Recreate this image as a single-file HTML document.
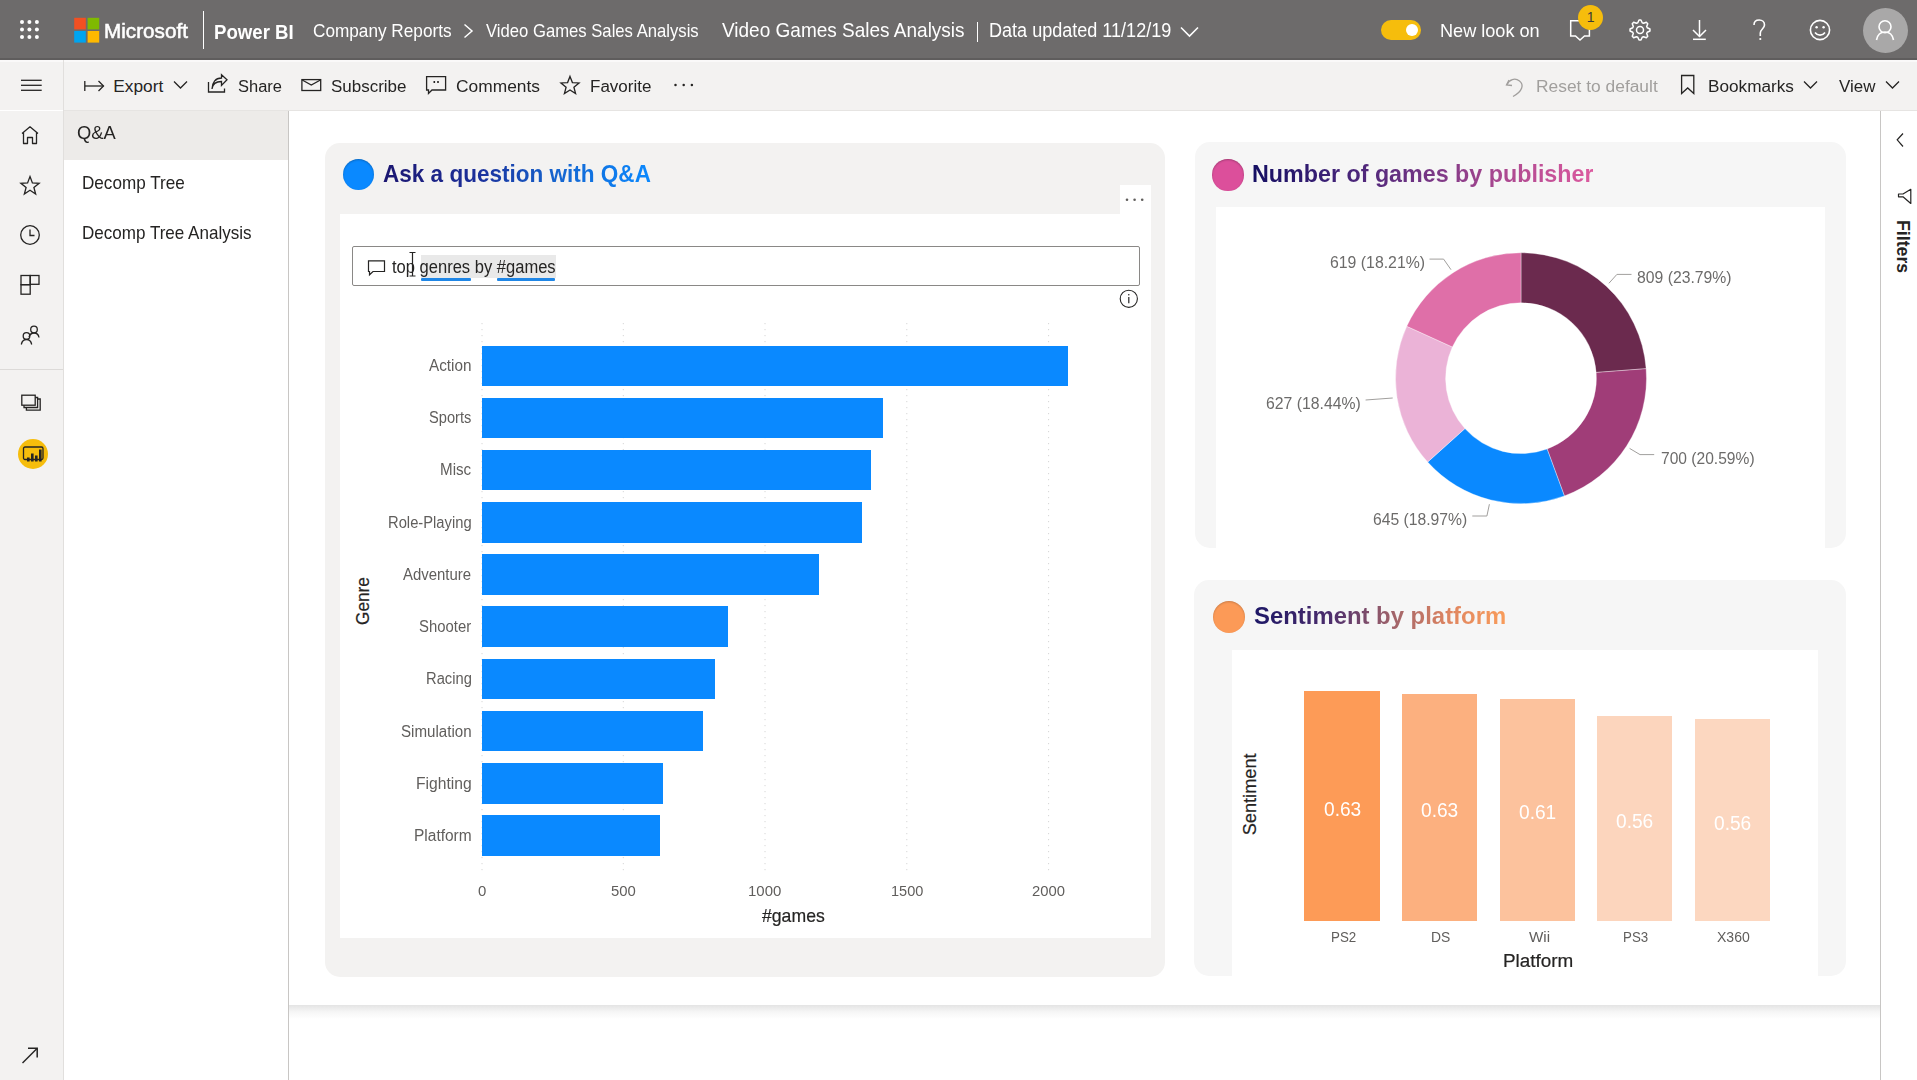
<!DOCTYPE html><html><head><meta charset="utf-8"><title>Power BI</title><style>
*{margin:0;padding:0;box-sizing:border-box}
html,body{width:1917px;height:1080px;overflow:hidden;background:#fff;font-family:"Liberation Sans",sans-serif}
.a{position:absolute}
.t{position:absolute;white-space:nowrap;transform-origin:0 0}
svg{position:absolute;overflow:visible}
</style></head><body>
<div class="a" style="left:0;top:0;width:1917px;height:60px;background:#6d6b6b"></div>
<div class="a" style="left:0;top:60px;width:1917px;height:50px;background:#f3f2f1"></div>
<div class="a" style="left:0;top:58px;width:1917px;height:2px;background:#5f5d5d"></div>
<div class="a" style="left:0;top:60px;width:1917px;height:2px;background:#faf9f9"></div>
<div class="a" style="left:64px;top:110px;width:1853px;height:1px;background:#e6e4e2"></div>
<div class="a" style="left:0;top:111px;width:63px;height:969px;background:#f3f2f1"></div>
<div class="a" style="left:63px;top:60px;width:1px;height:1020px;background:#e1dfdd"></div>
<div class="a" style="left:0;top:369px;width:63px;height:1px;background:#dcdad8"></div>
<div class="a" style="left:64px;top:111px;width:224px;height:969px;background:#fff"></div>
<div class="a" style="left:64px;top:111px;width:224px;height:49px;background:#edebe9"></div>
<div class="a" style="left:288px;top:111px;width:1px;height:969px;background:#c8c6c4"></div>
<div class="a" style="left:1880px;top:111px;width:1px;height:969px;background:#c8c6c4"></div>
<div class="a" style="left:289px;top:1005px;width:1591px;height:14px;background:linear-gradient(#e4e4e4,#f6f6f6 50%,#fff)"></div>
<div class="a" style="left:325px;top:143px;width:840px;height:834px;background:#f3f2f1;border-radius:15px"></div>
<div class="a" style="left:340px;top:214px;width:811px;height:724px;background:#fff"></div>
<div class="a" style="left:1120px;top:185px;width:31px;height:30px;background:#fff"></div>
<div class="a" style="left:1195px;top:142px;width:651px;height:406px;background:#f6f6f6;border-radius:15px"></div>
<div class="a" style="left:1216px;top:207px;width:609px;height:341px;background:#fff"></div>
<div class="a" style="left:1194px;top:580px;width:652px;height:396px;background:#f6f6f6;border-radius:15px"></div>
<div class="a" style="left:1232px;top:650px;width:586px;height:326px;background:#fff"></div>
<svg style="left:0px;top:0px" width="60" height="60" viewBox="0 0 60 60" ><circle cx="22.0" cy="22.0" r="2" fill="#fff"/><circle cx="22.0" cy="29.4" r="2" fill="#fff"/><circle cx="22.0" cy="36.9" r="2" fill="#fff"/><circle cx="29.4" cy="22.0" r="2" fill="#fff"/><circle cx="29.4" cy="29.4" r="2" fill="#fff"/><circle cx="29.4" cy="36.9" r="2" fill="#fff"/><circle cx="36.9" cy="22.0" r="2" fill="#fff"/><circle cx="36.9" cy="29.4" r="2" fill="#fff"/><circle cx="36.9" cy="36.9" r="2" fill="#fff"/></svg>
<svg style="left:0px;top:0px" width="110" height="60" viewBox="0 0 110 60" ><rect x="74.2" y="17.8" width="11.6" height="11.6" fill="#f25022"/><rect x="87.6" y="17.8" width="11.6" height="11.6" fill="#7fba00"/><rect x="74.2" y="31" width="11.6" height="11.6" fill="#00a4ef"/><rect x="87.6" y="31" width="11.6" height="11.6" fill="#ffb900"/></svg>
<div class="t " style="left:104.05px;top:21.00px;font-size:20.50px;line-height:20.50px;font-weight:normal;color:#ffffff;transform:scaleX(1.0088);-webkit-text-stroke:0.55px #fff;">Microsoft</div>
<div class="a" style="left:203px;top:11px;width:1.3px;height:38px;background:#fff"></div>
<div class="t " style="left:213.59px;top:23.00px;font-size:19.50px;line-height:19.50px;font-weight:bold;color:#ffffff;transform:scaleX(0.9551);">Power BI</div>
<div class="t " style="left:312.74px;top:21.00px;font-size:19.00px;line-height:19.00px;font-weight:normal;color:#ffffff;transform:scaleX(0.9048);">Company Reports</div>
<svg style="left:460px;top:20px" width="20" height="20" viewBox="0 0 20 20" ><polyline points="4.5,4.5 12,11 4.5,17.5" fill="none" stroke="#fff" stroke-width="1.5"/></svg>
<div class="t " style="left:485.92px;top:21.00px;font-size:19.00px;line-height:19.00px;font-weight:normal;color:#ffffff;transform:scaleX(0.8768);">Video Games Sales Analysis</div>
<div class="t " style="left:722.40px;top:19.00px;font-size:21.00px;line-height:21.00px;font-weight:normal;color:#ffffff;transform:scaleX(0.9049);">Video Games Sales Analysis</div>
<div class="a" style="left:976.5px;top:22px;width:1.6px;height:20px;background:#fff"></div>
<div class="t " style="left:988.96px;top:21.00px;font-size:19.50px;line-height:19.50px;font-weight:normal;color:#ffffff;transform:scaleX(0.9254);">Data updated 11/12/19</div>
<svg style="left:1178px;top:20px" width="24" height="20" viewBox="0 0 24 20" ><polyline points="3,7.5 11.5,16 20,7.5" fill="none" stroke="#fff" stroke-width="1.6"/></svg>
<div class="a" style="left:1381px;top:20px;width:40px;height:20px;border-radius:10px;background:#f6bd0c"></div>
<div class="a" style="left:1405.9px;top:24.1px;width:11.8px;height:11.8px;border-radius:50%;background:#fff"></div>
<div class="t " style="left:1439.85px;top:22.00px;font-size:18.50px;line-height:18.50px;font-weight:normal;color:#ffffff;transform:scaleX(0.9791);">New look on</div>
<svg style="left:1565px;top:15px" width="30" height="30" viewBox="0 0 30 30" ><path d="M5.7,5.8 H24.4 V20.9 H19.5 L15,25 L10.5,20.9 H5.7 Z" fill="none" stroke="#fff" stroke-width="1.5"/></svg>
<div class="a" style="left:1578px;top:5px;width:25px;height:25px;border-radius:50%;background:#f6bd0c"></div>
<div class="t " style="left:1586.70px;top:10.00px;font-size:14.00px;line-height:14.00px;font-weight:normal;color:#3b3a39;">1</div>
<svg style="left:1625px;top:15px" width="30" height="30" viewBox="0 0 30 30" ><polygon points="24.95,14.02 24.95,15.98 22.27,17.21 21.70,18.58 22.73,21.34 21.34,22.73 18.58,21.70 17.21,22.27 15.98,24.95 14.02,24.95 12.79,22.27 11.42,21.70 8.66,22.73 7.27,21.34 8.30,18.58 7.73,17.21 5.05,15.98 5.05,14.02 7.73,12.79 8.30,11.42 7.27,8.66 8.66,7.27 11.42,8.30 12.79,7.73 14.02,5.05 15.98,5.05 17.21,7.73 18.58,8.30 21.34,7.27 22.73,8.66 21.70,11.42 22.27,12.79" fill="none" stroke="#fff" stroke-width="1.5" stroke-linejoin="round"/><circle cx="15" cy="15" r="3.5" fill="none" stroke="#fff" stroke-width="1.5"/></svg>
<svg style="left:1685px;top:15px" width="30" height="30" viewBox="0 0 30 30" ><line x1="14.5" y1="5" x2="14.5" y2="21.5" stroke="#fff" stroke-width="1.5"/><polyline points="8,15 14.5,21.5 21,15" fill="none" stroke="#fff" stroke-width="1.5"/><line x1="8" y1="24.3" x2="20.8" y2="24.3" stroke="#fff" stroke-width="1.5"/></svg>
<svg style="left:1745px;top:15px" width="30" height="30" viewBox="0 0 30 30" ><path d="M9,10 C9,6.5 11.5,5 14.2,5 C17.2,5 19.5,7 19.5,10 C19.5,13.5 15.3,14.5 15.3,18 V21" fill="none" stroke="#fff" stroke-width="1.6"/><circle cx="15.3" cy="24" r="1.1" fill="#fff"/></svg>
<svg style="left:1805px;top:15px" width="30" height="30" viewBox="0 0 30 30" ><circle cx="15" cy="15" r="9.6" fill="none" stroke="#fff" stroke-width="1.6"/><circle cx="11.6" cy="12.3" r="1.2" fill="#fff"/><circle cx="18.6" cy="12.3" r="1.2" fill="#fff"/><path d="M10,17.5 C12.5,21 17.5,21 20,17.5" fill="none" stroke="#fff" stroke-width="1.6"/></svg>
<div class="a" style="left:1863px;top:8px;width:45px;height:45px;border-radius:50%;background:#a9a8a8"></div>
<svg style="left:1870px;top:15px" width="30" height="30" viewBox="0 0 30 30" ><circle cx="15" cy="11.8" r="6" fill="none" stroke="#fff" stroke-width="1.6"/><path d="M6.5,25 C7.5,19.5 11,17 15,17 C19,17 22.5,19.5 23.5,25" fill="none" stroke="#fff" stroke-width="1.6"/></svg>
<svg style="left:84px;top:76px" width="22" height="20" viewBox="0 0 22 20" ><line x1="0.8" y1="5" x2="0.8" y2="15" stroke="#252423" stroke-width="1.3" fill="none"/><line x1="1" y1="10" x2="19.5" y2="10" stroke="#252423" stroke-width="1.3" fill="none"/><polyline points="14.5,5 19.5,10 14.5,15" stroke="#252423" stroke-width="1.3" fill="none"/></svg>
<div class="t " style="left:113.32px;top:78.00px;font-size:17.30px;line-height:17.30px;font-weight:normal;color:#252423;">Export</div>
<svg style="left:172px;top:78px" width="18" height="14" viewBox="0 0 18 14" ><polyline points="2,3.5 8.5,10 15,3.5" stroke="#252423" stroke-width="1.3" fill="none"/></svg>
<svg style="left:206px;top:74px" width="24" height="22" viewBox="0 0 24 22" ><path d="M2.5,8 V18 H18.5 V14.5" stroke="#252423" stroke-width="1.3" fill="none"/><path d="M6,15 C6.5,10 10,7.5 15.5,7.5 V11.5 L21,5.8 L15.5,0.8 V4 C9.5,4 6,8.5 6,15 Z" stroke="#252423" stroke-width="1.3" fill="none"/></svg>
<div class="t " style="left:238.16px;top:78.00px;font-size:17.30px;line-height:17.30px;font-weight:normal;color:#252423;transform:scaleX(0.9540);">Share</div>
<svg style="left:300px;top:76px" width="24" height="18" viewBox="0 0 24 18" ><rect x="1.9" y="3.6" width="18.8" height="10.9" stroke="#252423" stroke-width="1.3" fill="none"/><polyline points="2.2,4 11.3,9 20.4,4" stroke="#252423" stroke-width="1.3" fill="none"/></svg>
<div class="t " style="left:331.24px;top:78.00px;font-size:17.30px;line-height:17.30px;font-weight:normal;color:#252423;transform:scaleX(0.9822);">Subscribe</div>
<svg style="left:424px;top:74px" width="24" height="22" viewBox="0 0 24 22" ><path d="M2.6,2.6 H21.6 V16 H8 L4.5,19.5 V16 H2.6 Z" stroke="#252423" stroke-width="1.3" fill="none"/><line x1="10.3" y1="7" x2="10.3" y2="9" stroke="#252423" stroke-width="1.6"/><line x1="14" y1="7" x2="14" y2="9" stroke="#252423" stroke-width="1.6"/></svg>
<div class="t " style="left:456.13px;top:78.00px;font-size:17.30px;line-height:17.30px;font-weight:normal;color:#252423;transform:scaleX(1.0052);">Comments</div>
<svg style="left:558px;top:74px" width="24" height="22" viewBox="0 0 24 22" ><polygon points="12.00,2.40 14.41,8.58 21.04,8.96 15.90,13.17 17.58,19.59 12.00,16.00 6.42,19.59 8.10,13.17 2.96,8.96 9.59,8.58" stroke="#252423" stroke-width="1.3" fill="none" stroke-linejoin="miter"/></svg>
<div class="t " style="left:589.84px;top:78.00px;font-size:17.30px;line-height:17.30px;font-weight:normal;color:#252423;transform:scaleX(0.9836);">Favorite</div>
<svg style="left:670px;top:80px" width="26" height="10" viewBox="0 0 26 10" ><circle cx="5.5" cy="5" r="1.25" fill="#252423"/><circle cx="13.7" cy="5" r="1.25" fill="#252423"/><circle cx="21.9" cy="5" r="1.25" fill="#252423"/></svg>
<svg style="left:1503px;top:74px" width="24" height="26" viewBox="0 0 24 26" ><path d="M6,6 L3.5,11 L9,11.5" fill="none" stroke="#a19f9d" stroke-width="1.3"/><path d="M4,10.8 C6,5.5 12,3.5 16.5,7 C21,10.5 20,17 10,22.5" fill="none" stroke="#a19f9d" stroke-width="1.3"/></svg>
<div class="t " style="left:1535.81px;top:78.00px;font-size:17.30px;line-height:17.30px;font-weight:normal;color:#a19f9d;transform:scaleX(1.0056);">Reset to default</div>
<svg style="left:1678px;top:73px" width="20" height="24" viewBox="0 0 20 24" ><path d="M3.6,2.5 H15.8 V20.5 L9.7,15 L3.6,20.5 Z" stroke="#252423" stroke-width="1.3" fill="none"/></svg>
<div class="t " style="left:1707.62px;top:78.00px;font-size:17.30px;line-height:17.30px;font-weight:normal;color:#252423;transform:scaleX(0.9940);">Bookmarks</div>
<svg style="left:1802px;top:78px" width="18" height="14" viewBox="0 0 18 14" ><polyline points="2,3.5 8.5,10 15,3.5" stroke="#252423" stroke-width="1.3" fill="none"/></svg>
<div class="t " style="left:1838.52px;top:78.00px;font-size:17.30px;line-height:17.30px;font-weight:normal;color:#252423;transform:scaleX(0.9809);">View</div>
<svg style="left:1884px;top:78px" width="18" height="14" viewBox="0 0 18 14" ><polyline points="2,3.5 8.5,10 15,3.5" stroke="#252423" stroke-width="1.3" fill="none"/></svg>
<svg style="left:14px;top:70px" width="36" height="30" viewBox="0 0 36 30" ><line x1="7" y1="10.3" x2="27.7" y2="10.3" stroke="#252423" stroke-width="1.3" fill="none"/><line x1="7" y1="15.3" x2="27.7" y2="15.3" stroke="#252423" stroke-width="1.3" fill="none"/><line x1="7" y1="20.3" x2="27.7" y2="20.3" stroke="#252423" stroke-width="1.3" fill="none"/></svg>
<svg style="left:15px;top:120px" width="30" height="30" viewBox="0 0 30 30" ><path d="M7,13.5 L15,6.8 L23,13.5 M8.5,12.5 V23.5 H12.5 V17.5 H17.5 V23.5 H21.5 V12.5" stroke="#252423" stroke-width="1.3" fill="none" stroke-linejoin="round"/></svg>
<svg style="left:15px;top:170px" width="30" height="30" viewBox="0 0 30 30" ><polygon points="15.00,6.60 17.41,12.88 24.13,13.23 18.90,17.47 20.64,23.97 15.00,20.30 9.36,23.97 11.10,17.47 5.87,13.23 12.59,12.88" stroke="#252423" stroke-width="1.3" fill="none"/></svg>
<svg style="left:15px;top:220px" width="30" height="30" viewBox="0 0 30 30" ><circle cx="15" cy="15" r="9.3" stroke="#252423" stroke-width="1.3" fill="none"/><polyline points="15,9.5 15,15.5 19.5,15.5" stroke="#252423" stroke-width="1.3" fill="none"/></svg>
<svg style="left:15px;top:270px" width="30" height="30" viewBox="0 0 30 30" ><rect x="6" y="5.5" width="9.2" height="9.2" stroke="#252423" stroke-width="1.3" fill="none"/><rect x="15.2" y="5.5" width="8.8" height="8.8" stroke="#252423" stroke-width="1.3" fill="none"/><rect x="6" y="14.7" width="9.2" height="9.5" stroke="#252423" stroke-width="1.3" fill="none"/></svg>
<svg style="left:15px;top:320px" width="30" height="30" viewBox="0 0 30 30" ><circle cx="19" cy="9.5" r="3.3" stroke="#252423" stroke-width="1.3" fill="none"/><path d="M14,17 C15,13.8 17,13 19,13 C21.5,13 23.5,14.5 24,17.5" stroke="#252423" stroke-width="1.3" fill="none"/><circle cx="11.5" cy="16" r="3.3" stroke="#252423" stroke-width="1.3" fill="none"/><path d="M6.3,24.5 C7,21 9,19.5 11.5,19.5 C14,19.5 16,21 16.7,24.5" stroke="#252423" stroke-width="1.3" fill="none"/></svg>
<svg style="left:15px;top:390px" width="30" height="26" viewBox="0 0 30 26" ><rect x="6.8" y="5.2" width="13.4" height="10" stroke="#252423" stroke-width="1.3" fill="none"/><path d="M20.2,7.5 H22.6 V17.5 H9 V15.2" stroke="#252423" stroke-width="1.3" fill="none"/><path d="M22.6,9 H25.2 V20.2 H11.4 V17.5" stroke="#252423" stroke-width="1.3" fill="none"/></svg>
<div class="a" style="left:17.8px;top:439px;width:30px;height:30px;border-radius:50%;background:#f6bd0c"></div>
<svg style="left:18px;top:439px" width="30" height="30" viewBox="0 0 30 30" ><rect x="5.5" y="8" width="19.5" height="12.5" rx="1.5" fill="none" stroke="#252423" stroke-width="1.3"/><rect x="9" y="18.5" width="2.6" height="4" fill="#252423"/><rect x="13" y="14.5" width="2.6" height="8" fill="#252423"/><rect x="17" y="16.5" width="2.6" height="6" fill="#252423"/><rect x="21" y="10.5" width="2.6" height="12" fill="#252423"/></svg>
<svg style="left:15px;top:1040px" width="30" height="30" viewBox="0 0 30 30" ><line x1="7.5" y1="23" x2="22" y2="8.5" stroke="#252423" stroke-width="1.5" fill="none"/><polyline points="13,8.3 22.2,8.3 22.2,17.5" stroke="#252423" stroke-width="1.5" fill="none"/></svg>
<div class="t " style="left:77.17px;top:124.00px;font-size:18.80px;line-height:18.80px;font-weight:normal;color:#252423;transform:scaleX(0.9763);">Q&amp;A</div>
<div class="t " style="left:82.13px;top:174.00px;font-size:18.50px;line-height:18.50px;font-weight:normal;color:#252423;transform:scaleX(0.9247);">Decomp Tree</div>
<div class="t " style="left:82.14px;top:224.00px;font-size:18.50px;line-height:18.50px;font-weight:normal;color:#252423;transform:scaleX(0.9211);">Decomp Tree Analysis</div>
<svg style="left:1890px;top:128px" width="20" height="24" viewBox="0 0 20 24" ><polyline points="13,5.5 7.2,11.8 13,18.5" fill="none" stroke="#252423" stroke-width="1.2"/></svg>
<svg style="left:1895px;top:186px" width="20" height="20" viewBox="0 0 20 20" ><path d="M15.8,3.3 V17.5 L8,10.8 H3.5 V8 H8 Z" fill="none" stroke="#252423" stroke-width="1.2" stroke-linejoin="round"/></svg>
<div class="t" style="left:1876.13px;top:237.62px;font-size:17.50px;line-height:17.50px;font-weight:bold;color:#252423;transform-origin:26.47px 8.78px;transform:rotate(90deg) scaleX(1.0106);">Filters</div>
<div class="a" style="left:343px;top:159.2px;width:31px;height:31px;border-radius:50%;background:#0a89ff;box-shadow:inset 0 1px 2px rgba(0,0,0,.25)"></div>
<div class="t " style="left:382.74px;top:162.00px;font-size:24.50px;line-height:24.50px;font-weight:bold;color:#000;transform:scaleX(0.9197);background:linear-gradient(90deg,#1c1670 0%,#1b2f9a 35%,#1565cf 65%,#0a89ff 100%);-webkit-background-clip:text;background-clip:text;-webkit-text-fill-color:transparent;">Ask a question with Q&amp;A</div>
<svg style="left:1120px;top:185px" width="31" height="30" viewBox="0 0 31 30" ><circle cx="7.0" cy="14.8" r="1.3" fill="#605e5c"/><circle cx="14.6" cy="14.8" r="1.3" fill="#605e5c"/><circle cx="22.2" cy="14.8" r="1.3" fill="#605e5c"/></svg>
<div class="a" style="left:351.5px;top:246px;width:788.5px;height:39.5px;border:1px solid #8a8886;border-radius:2px;background:#fff"></div>
<div class="a" style="left:421px;top:255px;width:134.5px;height:22.5px;background:#e9e9e9"></div>
<svg style="left:364px;top:256px" width="24" height="22" viewBox="0 0 24 22" ><path d="M4.5,4.8 H20.5 V15.5 H9 L5.5,18.8 V15.5 H4.5 Z" fill="none" stroke="#252423" stroke-width="1.2"/></svg>
<div class="t " style="left:392.15px;top:259.00px;font-size:17.50px;line-height:17.50px;font-weight:normal;color:#252423;transform:scaleX(0.9449);">top genres by #games</div>
<div class="a" style="left:421px;top:278px;width:49.5px;height:2.6px;background:#1f86e6;border-radius:1px"></div>
<div class="a" style="left:497.3px;top:278px;width:58px;height:2.6px;background:#1f86e6;border-radius:1px"></div>
<svg style="left:405px;top:250px" width="16" height="30" viewBox="0 0 16 30" ><path d="M4.5,2.5 H10.5 M7.5,2.5 V26 M4.5,26 H10.5" fill="none" stroke="#252423" stroke-width="1.2"/></svg>
<svg style="left:1118px;top:288px" width="22" height="22" viewBox="0 0 22 22" ><circle cx="10.8" cy="10.8" r="8.6" fill="none" stroke="#252423" stroke-width="1.1"/><line x1="10.8" y1="9" x2="10.8" y2="15.2" stroke="#252423" stroke-width="1.2"/><circle cx="10.8" cy="6.8" r="0.8" fill="#252423"/></svg>
<svg style="left:0px;top:0px" width="1917" height="1080" viewBox="0 0 1917 1080" style="left:0;top:0"><line x1="482.0" y1="323" x2="482.0" y2="872" stroke="#d6d6d6" stroke-width="1" stroke-dasharray="1.2 4.8"/><line x1="623.3" y1="323" x2="623.3" y2="872" stroke="#d6d6d6" stroke-width="1" stroke-dasharray="1.2 4.8"/><line x1="765.0" y1="323" x2="765.0" y2="872" stroke="#d6d6d6" stroke-width="1" stroke-dasharray="1.2 4.8"/><line x1="906.8" y1="323" x2="906.8" y2="872" stroke="#d6d6d6" stroke-width="1" stroke-dasharray="1.2 4.8"/><line x1="1048.6" y1="323" x2="1048.6" y2="872" stroke="#d6d6d6" stroke-width="1" stroke-dasharray="1.2 4.8"/></svg>
<div class="a" style="left:482px;top:345.6px;width:586.0px;height:40.5px;background:#0a89ff"></div>
<div class="t " style="left:429.12px;top:358.00px;font-size:15.60px;line-height:15.60px;font-weight:normal;color:#605e5c;transform:scaleX(0.9816);">Action</div>
<div class="a" style="left:482px;top:397.8px;width:400.8px;height:40.5px;background:#0a89ff"></div>
<div class="t " style="left:428.94px;top:410.00px;font-size:15.60px;line-height:15.60px;font-weight:normal;color:#605e5c;transform:scaleX(0.9376);">Sports</div>
<div class="a" style="left:482px;top:449.7px;width:389.1px;height:40.5px;background:#0a89ff"></div>
<div class="t " style="left:439.89px;top:462.00px;font-size:15.60px;line-height:15.60px;font-weight:normal;color:#605e5c;transform:scaleX(0.9730);">Misc</div>
<div class="a" style="left:482px;top:502.0px;width:379.7px;height:40.5px;background:#0a89ff"></div>
<div class="t " style="left:388.02px;top:515.00px;font-size:15.60px;line-height:15.60px;font-weight:normal;color:#605e5c;transform:scaleX(0.9456);">Role-Playing</div>
<div class="a" style="left:482px;top:554.2px;width:336.9px;height:40.5px;background:#0a89ff"></div>
<div class="t " style="left:403.23px;top:567.00px;font-size:15.60px;line-height:15.60px;font-weight:normal;color:#605e5c;transform:scaleX(0.9580);">Adventure</div>
<div class="a" style="left:482px;top:606.3px;width:245.6px;height:40.5px;background:#0a89ff"></div>
<div class="t " style="left:418.83px;top:619.00px;font-size:15.60px;line-height:15.60px;font-weight:normal;color:#605e5c;transform:scaleX(0.9541);">Shooter</div>
<div class="a" style="left:482px;top:658.7px;width:232.9px;height:40.5px;background:#0a89ff"></div>
<div class="t " style="left:425.82px;top:671.00px;font-size:15.60px;line-height:15.60px;font-weight:normal;color:#605e5c;transform:scaleX(0.9448);">Racing</div>
<div class="a" style="left:482px;top:710.9px;width:221.2px;height:40.5px;background:#0a89ff"></div>
<div class="t " style="left:401.02px;top:724.00px;font-size:15.60px;line-height:15.60px;font-weight:normal;color:#605e5c;transform:scaleX(0.9700);">Simulation</div>
<div class="a" style="left:482px;top:763.3px;width:181.0px;height:40.5px;background:#0a89ff"></div>
<div class="t " style="left:416.05px;top:776.00px;font-size:15.60px;line-height:15.60px;font-weight:normal;color:#605e5c;transform:scaleX(1.0038);">Fighting</div>
<div class="a" style="left:482px;top:815.2px;width:177.9px;height:40.5px;background:#0a89ff"></div>
<div class="t " style="left:414.06px;top:828.00px;font-size:15.60px;line-height:15.60px;font-weight:normal;color:#605e5c;transform:scaleX(0.9934);">Platform</div>
<div class="t " style="left:478.20px;top:884.00px;font-size:14.70px;line-height:14.70px;font-weight:normal;color:#605e5c;transform:scaleX(1.0168);">0</div>
<div class="t " style="left:611.40px;top:884.00px;font-size:14.70px;line-height:14.70px;font-weight:normal;color:#605e5c;transform:scaleX(1.0129);">500</div>
<div class="t " style="left:748.38px;top:884.00px;font-size:14.70px;line-height:14.70px;font-weight:normal;color:#605e5c;transform:scaleX(1.0188);">1000</div>
<div class="t " style="left:890.71px;top:884.00px;font-size:14.70px;line-height:14.70px;font-weight:normal;color:#605e5c;transform:scaleX(0.9898);">1500</div>
<div class="t " style="left:1031.66px;top:884.00px;font-size:14.70px;line-height:14.70px;font-weight:normal;color:#605e5c;transform:scaleX(1.0101);">2000</div>
<div class="t " style="left:762.31px;top:907.00px;font-size:18.50px;line-height:18.50px;font-weight:normal;color:#252423;transform:scaleX(0.9536);-webkit-text-stroke:0.2px #252423;">#games</div>
<div class="t" style="left:337.94px;top:592.07px;font-size:18.00px;line-height:18.00px;font-weight:normal;color:#252423;transform-origin:25.07px 9.03px;transform:rotate(-90deg) scaleX(0.9559);-webkit-text-stroke:0.2px #252423;">Genre</div>
<div class="a" style="left:1212px;top:159.2px;width:31.5px;height:31.5px;border-radius:50%;background:#dc4f9b;box-shadow:inset 0 1px 2px rgba(0,0,0,.25)"></div>
<div class="t " style="left:1251.59px;top:162.00px;font-size:24.50px;line-height:24.50px;font-weight:bold;color:#000;transform:scaleX(0.9503);background:linear-gradient(90deg,#150f62 0%,#3b2075 22%,#6e3383 48%,#a8478f 72%,#dc5a9f 100%);-webkit-background-clip:text;background-clip:text;-webkit-text-fill-color:transparent;">Number of games by publisher</div>
<svg style="left:0px;top:0px" width="1917" height="1080" viewBox="0 0 1917 1080" style="left:0;top:0"><path d="M1521.00,252.70 A125.50,125.50 0 0 1 1646.14,368.67 L1596.18,372.47 A75.40,75.40 0 0 0 1521.00,302.80 Z" fill="#6b2a4e" stroke="rgba(255,255,255,0.6)" stroke-width="0.6"/><path d="M1646.14,368.67 A125.50,125.50 0 0 1 1564.40,495.96 L1547.08,448.95 A75.40,75.40 0 0 0 1596.18,372.47 Z" fill="#a03d78" stroke="rgba(255,255,255,0.6)" stroke-width="0.6"/><path d="M1564.40,495.96 A125.50,125.50 0 0 1 1427.65,462.08 L1464.91,428.59 A75.40,75.40 0 0 0 1547.08,448.95 Z" fill="#0a89ff" stroke="rgba(255,255,255,0.6)" stroke-width="0.6"/><path d="M1427.65,462.08 A125.50,125.50 0 0 1 1406.75,326.27 L1452.36,347.00 A75.40,75.40 0 0 0 1464.91,428.59 Z" fill="#ebb3d7" stroke="rgba(255,255,255,0.6)" stroke-width="0.6"/><path d="M1406.75,326.27 A125.50,125.50 0 0 1 1521.00,252.70 L1521.00,302.80 A75.40,75.40 0 0 0 1452.36,347.00 Z" fill="#df6fa8" stroke="rgba(255,255,255,0.6)" stroke-width="0.6"/><polyline points="1608.9,283.3 1616.9,274.4 1631.5,274.4" fill="none" stroke="#a19f9d" stroke-width="1"/><polyline points="1429.5,259.1 1443.6,259.1 1451,269.7" fill="none" stroke="#a19f9d" stroke-width="1"/><polyline points="1365.6,400 1392.7,398" fill="none" stroke="#a19f9d" stroke-width="1"/><polyline points="1629.6,448.4 1640,454.6 1654.2,454.6" fill="none" stroke="#a19f9d" stroke-width="1"/><polyline points="1472.3,516 1486.9,516 1489.4,504.2" fill="none" stroke="#a19f9d" stroke-width="1"/></svg>
<div class="t " style="left:1636.89px;top:270.00px;font-size:16.80px;line-height:16.80px;font-weight:normal;color:#6c6b6a;transform:scaleX(0.9380);">809 (23.79%)</div>
<div class="t " style="left:1329.61px;top:255.00px;font-size:16.80px;line-height:16.80px;font-weight:normal;color:#6c6b6a;transform:scaleX(0.9439);">619 (18.21%)</div>
<div class="t " style="left:1266.31px;top:396.00px;font-size:16.80px;line-height:16.80px;font-weight:normal;color:#6c6b6a;transform:scaleX(0.9409);">627 (18.44%)</div>
<div class="t " style="left:1660.52px;top:451.00px;font-size:16.80px;line-height:16.80px;font-weight:normal;color:#6c6b6a;transform:scaleX(0.9287);">700 (20.59%)</div>
<div class="t " style="left:1372.61px;top:512.00px;font-size:16.80px;line-height:16.80px;font-weight:normal;color:#6c6b6a;transform:scaleX(0.9358);">645 (18.97%)</div>
<div class="a" style="left:1213px;top:600.7px;width:32px;height:32px;border-radius:50%;background:#fc9a57;box-shadow:inset 0 1px 2px rgba(0,0,0,.2)"></div>
<div class="t " style="left:1253.88px;top:604.00px;font-size:24.50px;line-height:24.50px;font-weight:bold;color:#000;transform:scaleX(0.9750);background:linear-gradient(90deg,#1d1766 0%,#4b2c6c 30%,#a0636a 55%,#e08660 78%,#f99c5a 100%);-webkit-background-clip:text;background-clip:text;-webkit-text-fill-color:transparent;">Sentiment by platform</div>
<div class="a" style="left:1304.4px;top:691.4px;width:75.6px;height:230.0px;background:#fd9b57"></div>
<div class="t " style="left:1323.93px;top:800.00px;font-size:19.50px;line-height:19.50px;font-weight:normal;color:#ffffff;transform:scaleX(0.9815);">0.63</div>
<div class="t " style="left:1330.63px;top:929.00px;font-size:15.30px;line-height:15.30px;font-weight:normal;color:#605e5c;transform:scaleX(0.8727);">PS2</div>
<div class="a" style="left:1402.2px;top:693.6px;width:75.0px;height:227.8px;background:#fcb07f"></div>
<div class="t " style="left:1421.43px;top:801.00px;font-size:19.50px;line-height:19.50px;font-weight:normal;color:#ffffff;transform:scaleX(0.9815);">0.63</div>
<div class="t " style="left:1430.99px;top:929.00px;font-size:15.30px;line-height:15.30px;font-weight:normal;color:#605e5c;transform:scaleX(0.9078);">DS</div>
<div class="a" style="left:1500.0px;top:698.6px;width:75.0px;height:222.8px;background:#fcc29d"></div>
<div class="t " style="left:1519.23px;top:803.00px;font-size:19.50px;line-height:19.50px;font-weight:normal;color:#ffffff;transform:scaleX(0.9815);">0.61</div>
<div class="t " style="left:1528.62px;top:929.00px;font-size:15.30px;line-height:15.30px;font-weight:normal;color:#605e5c;transform:scaleX(0.9941);">Wii</div>
<div class="a" style="left:1597.2px;top:716.4px;width:75.0px;height:205.0px;background:#fcd5bd"></div>
<div class="t " style="left:1616.43px;top:812.00px;font-size:19.50px;line-height:19.50px;font-weight:normal;color:#ffffff;transform:scaleX(0.9815);">0.56</div>
<div class="t " style="left:1623.33px;top:929.00px;font-size:15.30px;line-height:15.30px;font-weight:normal;color:#605e5c;transform:scaleX(0.8702);">PS3</div>
<div class="a" style="left:1694.7px;top:719.2px;width:75.0px;height:202.2px;background:#fcd7c0"></div>
<div class="t " style="left:1713.93px;top:814.00px;font-size:19.50px;line-height:19.50px;font-weight:normal;color:#ffffff;transform:scaleX(0.9815);">0.56</div>
<div class="t " style="left:1717.35px;top:929.00px;font-size:15.30px;line-height:15.30px;font-weight:normal;color:#605e5c;transform:scaleX(0.9185);">X360</div>
<div class="t " style="left:1503.49px;top:952.00px;font-size:18.00px;line-height:18.00px;font-weight:normal;color:#252423;transform:scaleX(1.0490);-webkit-text-stroke:0.2px #252423;">Platform</div>
<div class="t" style="left:1208.64px;top:784.87px;font-size:18.00px;line-height:18.00px;font-weight:normal;color:#252423;transform-origin:40.86px 9.03px;transform:rotate(-90deg) scaleX(1.0112);-webkit-text-stroke:0.2px #252423;">Sentiment</div>
</body></html>
